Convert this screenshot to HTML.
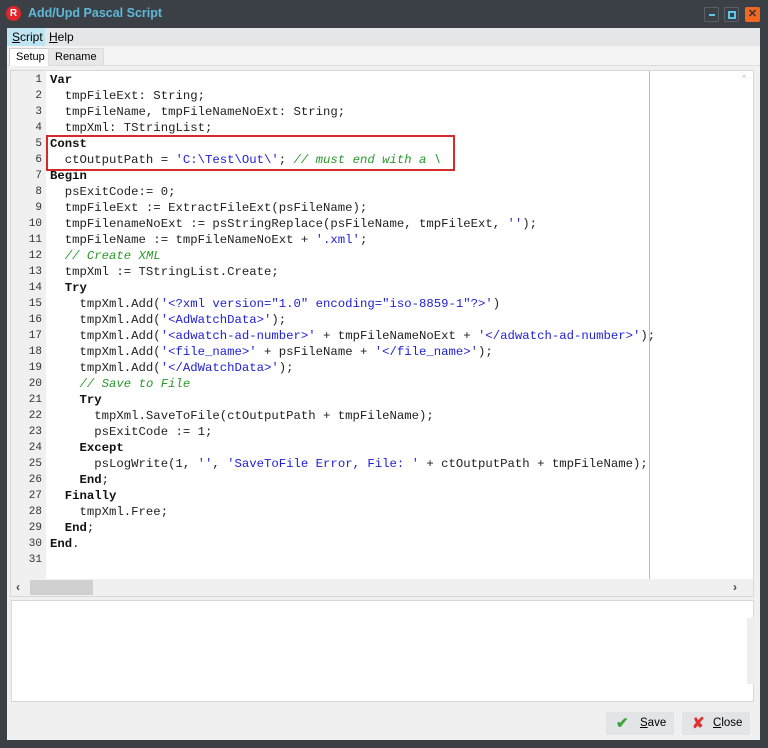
<!DOCTYPE html>
<html><head><style>
*{margin:0;padding:0;box-sizing:border-box}
body{width:768px;height:748px;background:#3b4047;position:relative;overflow:hidden;font-family:"Liberation Sans",sans-serif}
.title{position:absolute;left:28px;top:6px;color:#5fb8d8;font-weight:bold;font-size:12.5px}
.logo{position:absolute;left:6px;top:6px;width:15px;height:15px;border-radius:50%;background:#e0262b;color:#fff;font-size:10px;font-weight:bold;text-align:center;line-height:15px}
.wb{position:absolute;top:7px;width:15px;height:15px;border:1px solid #5a6068;border-radius:2px}
.client{position:absolute;left:7px;top:28px;width:753px;height:712px;background:#f0f0f0}
.menu{position:absolute;left:0;top:0;width:753px;height:18px;background:#e4e6e8;font-size:12px}
.menu span{position:absolute;top:2px}
.tabs{position:absolute;left:0;top:18px;width:753px;height:20px;background:#f3f3f3;border-bottom:1px solid #ddd}
.tab{position:absolute;top:2px;height:18px;font-size:11px;padding:2px 6px}
.ed{position:absolute;left:3px;top:42px;width:744px;height:527px;background:#fff;border:1px solid #d8d8d8;overflow:hidden}
.gut{position:absolute;left:0;top:0;width:35px;height:508px;background:#f0f0f0}
.nums{position:absolute;left:0;top:1px;width:31px;text-align:right;font-family:"Liberation Mono",monospace;font-size:11px;line-height:16px;color:#333;white-space:pre}
.code{position:absolute;left:39px;top:1px;font-family:"Liberation Mono",monospace;font-size:12.3px;line-height:16px;color:#222;white-space:pre}
b{color:#111}
.s{color:#2020d8}.c{color:#2a9a2a;font-style:italic}
.vs{position:absolute;left:729px;top:0;width:13px;height:508px;background:#fff}
.hs{position:absolute;left:0;top:508px;width:742px;height:17px;background:#f0f0f0}
.out{position:absolute;left:4px;top:572px;width:743px;height:102px;background:#fff;border:1px solid #d8d8d8}
.btn{position:absolute;top:684px;width:68px;height:23px;background:#e2e4e6;border-radius:2px;font-size:11.5px;line-height:23px}
</style></head><body>
<div class="logo">R</div>
<div class="title">Add/Upd Pascal Script</div>
<div class="wb" style="left:704px"><div style="position:absolute;left:4px;top:6px;width:6px;height:2px;background:#5fc8e8"></div></div>
<div class="wb" style="left:724px"><div style="position:absolute;left:3px;top:3px;width:8px;height:8px;border:2px solid #5fc8e8"></div></div>
<div class="wb" style="left:745px;background:#f26722;border-color:#f26722;color:#333;font-size:11px;font-weight:bold;text-align:center;line-height:13px">✕</div>
<div class="client">
 <div class="menu"><span style="left:0;top:0;height:18px;width:38px;background:#bfe4f2;padding:2px 0 0 5px"><u>S</u>cript</span><span style="left:42px"><u>H</u>elp</span></div>
 <div class="tabs"><div class="tab" style="left:2px;background:#fff;border:1px solid #ccc;border-bottom:none">Setup</div><div class="tab" style="left:41px;background:#e8e8e8;border:1px solid #ddd">Rename</div></div>
 <div class="ed">
  <div class="gut"></div>
  <div style="position:absolute;left:638px;top:0;width:1px;height:508px;background:#bbb"></div>
  <div class="nums">1
2
3
4
5
6
7
8
9
10
11
12
13
14
15
16
17
18
19
20
21
22
23
24
25
26
27
28
29
30
31</div>
  <div class="code"><b>Var</b>
  tmpFileExt: String;
  tmpFileName, tmpFileNameNoExt: String;
  tmpXml: TStringList;
<b>Const</b>
  ctOutputPath = <span class="s">'C:\Test\Out\'</span>; <span class="c">// must end with a \</span>
<b>Begin</b>
  psExitCode:= 0;
  tmpFileExt := ExtractFileExt(psFileName);
  tmpFilenameNoExt := psStringReplace(psFileName, tmpFileExt, <span class="s">''</span>);
  tmpFileName := tmpFileNameNoExt + <span class="s">'.xml'</span>;
  <span class="c">// Create XML</span>
  tmpXml := TStringList.Create;
  <b>Try</b>
    tmpXml.Add(<span class="s">'&lt;?xml version="1.0" encoding="iso-8859-1"?&gt;'</span>)
    tmpXml.Add(<span class="s">'&lt;AdWatchData&gt;'</span>);
    tmpXml.Add(<span class="s">'&lt;adwatch-ad-number&gt;'</span> + tmpFileNameNoExt + <span class="s">'&lt;/adwatch-ad-number&gt;'</span>);
    tmpXml.Add(<span class="s">'&lt;file_name&gt;'</span> + psFileName + <span class="s">'&lt;/file_name&gt;'</span>);
    tmpXml.Add(<span class="s">'&lt;/AdWatchData&gt;'</span>);
    <span class="c">// Save to File</span>
    <b>Try</b>
      tmpXml.SaveToFile(ctOutputPath + tmpFileName);
      psExitCode := 1;
    <b>Except</b>
      psLogWrite(1, <span class="s">''</span>, <span class="s">'SaveToFile Error, File: '</span> + ctOutputPath + tmpFileName);
    <b>End</b>;
  <b>Finally</b>
    tmpXml.Free;
  <b>End</b>;
<b>End</b>.
</div>
  <div style="position:absolute;left:35px;top:64px;width:409px;height:36px;border:2px solid #d42a2a"></div>
  <div class="vs"><span style="position:absolute;left:2px;top:2px;font-size:9px;color:#bbb">^</span></div>
  <div class="hs"><span style="position:absolute;left:5px;top:1px;font-size:12px;font-weight:bold;color:#444">‹</span><div style="position:absolute;left:19px;top:1px;width:63px;height:15px;background:#d0d0d0"></div><span style="position:absolute;left:722px;top:1px;font-size:12px;font-weight:bold;color:#444">›</span></div>
 </div>
 <div class="out"><div style="position:absolute;left:735px;top:17px;width:8px;height:66px;background:#eee"></div></div>
 <div class="btn" style="left:599px"><span style="position:absolute;left:10px;color:#3aa53a;font-size:15px;font-weight:bold">✔</span><span style="position:absolute;left:34px"><u>S</u>ave</span></div>
 <div class="btn" style="left:675px"><span style="position:absolute;left:10px;color:#e03030;font-size:15px;font-weight:bold">✘</span><span style="position:absolute;left:31px"><u>C</u>lose</span></div>
</div>
</body></html>
